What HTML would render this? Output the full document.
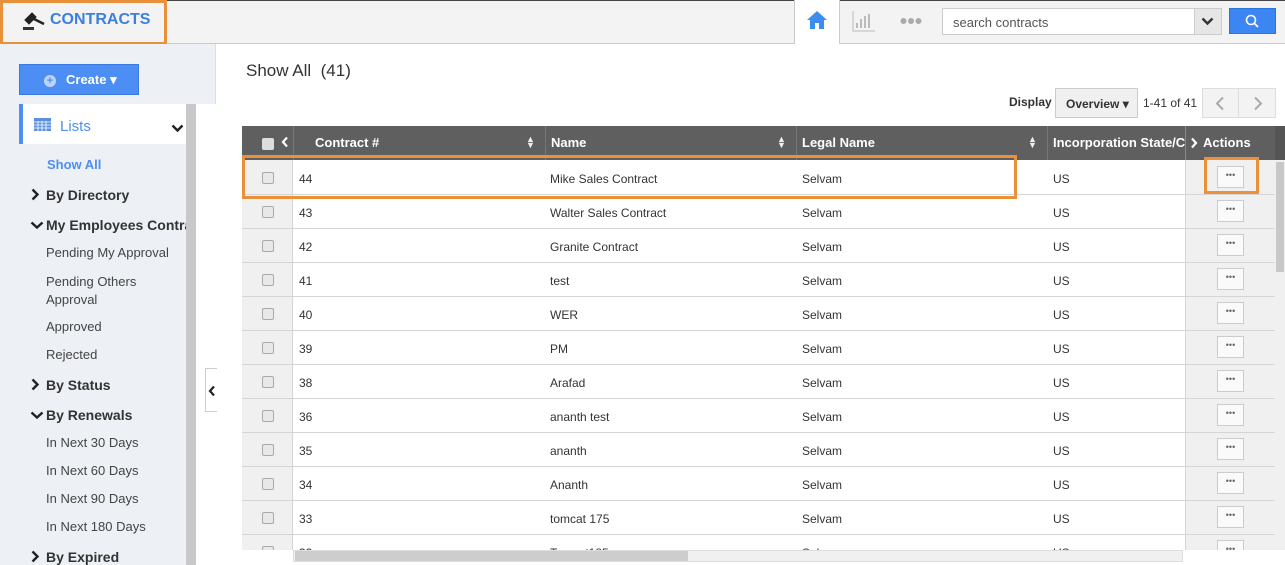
<!DOCTYPE html><html><head><style>
*{box-sizing:border-box;margin:0;padding:0}
body{width:1285px;height:565px;overflow:hidden;font-family:"Liberation Sans",Arial,sans-serif;background:#fff;position:relative;color:#333}
.a{position:absolute}
.top{left:0;top:0;width:1285px;height:44px;background:#f3f3f3;border-bottom:1px solid #ccc;border-top:1px solid #444}
.side{left:0;top:44px;width:216px;height:521px;background:#edf0f5;border-right:1px solid #ddd}
.si{position:absolute;left:46px;font-size:13px;color:#444}
.sb{position:absolute;left:46px;font-size:14px;font-weight:bold;color:#333}
.chev{position:absolute;left:31px}
.hd{top:126px;left:242px;width:1043px;height:34px;background:#5f5f5f;color:#fff;font-weight:bold;font-size:13px}
.row{left:242px;width:1033px;height:34px;border-bottom:1px solid #d5d5d5;font-size:12px;color:#333}
.row span{position:absolute;top:11px}
.cb{position:absolute;left:20px;top:11px;width:12px;height:12px;border:1px solid #aaa;border-radius:2px;background:#e8e8e8}
.act{position:absolute;left:975px;top:5px;width:27px;height:22px;border:1px solid #ccc;background:#fafafa;font-size:9px;text-align:center;line-height:16px;color:#666}
.sort{position:absolute;top:10px;font-size:9px;line-height:6px;color:#eee}
</style></head><body>
<div class="a top"></div>
<div class="a" style="left:0;top:0;width:167px;height:45px;border:3px solid #e8913a"></div>
<svg class="a" style="left:21px;top:11px" width="26" height="20" viewBox="0 0 26 20"><rect x="2" y="16" width="11" height="3" fill="#333"/><path d="M5 9l6-6 3 3-6 6z M11 7l12 6" stroke="#222" stroke-width="2.5" fill="#222"/></svg>
<div class="a" style="left:50px;top:11px;font-size:16px;font-weight:bold;color:#3b7fe0">CONTRACTS</div>
<div class="a" style="left:794px;top:0;width:46px;height:44px;background:#fff;border-left:1px solid #ccc;border-right:1px solid #ccc"></div>
<svg class="a" style="left:806px;top:9px" width="22" height="22" viewBox="0 0 22 22"><path d="M11 2L1 11h3v9h5v-6h4v6h5v-9h3z" fill="#3b8ef0"/></svg>
<svg class="a" style="left:852px;top:10px" width="24" height="22"><path d="M1 1v20h22" stroke="#bbb" fill="none"/><path d="M5 18v-5M9 18v-9M13 18v-12M17 18v-14" stroke="#bbb" stroke-width="2"/></svg>
<svg class="a" style="left:900px;top:17px" width="22" height="8"><circle cx="3.5" cy="4" r="3" fill="#aaa"/><circle cx="11" cy="4" r="3" fill="#aaa"/><circle cx="18.5" cy="4" r="3" fill="#aaa"/></svg>
<div class="a" style="left:942px;top:8px;width:280px;height:27px;background:#fff;border:1px solid #ccc;font-size:13px;color:#555;padding:6px 10px">search contracts</div>
<div class="a" style="left:1194px;top:9px;width:27px;height:25px;background:#e6e6e6;border-left:1px solid #ccc"></div>
<svg class="a" style="left:1201px;top:17px" width="13" height="9"><path d="M1.5 1.5l5 5 5-5" stroke="#333" stroke-width="2.4" fill="none"/></svg>
<div class="a" style="left:1229px;top:8px;width:47px;height:26px;background:#3b86f2;border:1px solid #2f73d6"></div>
<svg class="a" style="left:1244px;top:13px" width="16" height="16"><circle cx="7" cy="7" r="4.5" stroke="#fff" stroke-width="1.6" fill="none"/><path d="M10 10l4 4" stroke="#fff" stroke-width="1.8"/></svg>

<div class="a side"></div>
<div class="a" style="left:19px;top:64px;width:120px;height:31px;background:#4d8ef5;border:1px solid #3a7ae0;color:#fff;font-size:13px;font-weight:bold;padding:7px 0 0 24px"><span style="display:inline-block;width:12px;height:12px;border-radius:6px;background:#bcd4fa;color:#4d8ef5;font-size:11px;line-height:12px;text-align:center;margin-right:10px">+</span>Create ▾</div>
<div class="a" style="left:19px;top:104px;width:167px;height:40px;background:#fff;border-left:4px solid #4d8ef5"></div>
<svg class="a" style="left:34px;top:118px" width="17" height="13"><rect width="17" height="13" fill="#5b8fe0"/><path d="M0 4h17M0 7h17M0 10h17M4 3v10M8 3v10M12 3v10" stroke="#fff" stroke-width=".8"/></svg>
<div class="a" style="left:60px;top:118px;font-size:15px;color:#4d8ef5">Lists</div>
<svg class="a" style="left:171px;top:124px" width="13" height="9"><path d="M1.5 1.5l5 5 5-5" stroke="#222" stroke-width="2.4" fill="none"/></svg>
<div class="a" style="left:186px;top:104px;width:10px;height:461px;background:#c8c8c8"></div>
<div class="a" style="left:196px;top:104px;width:20px;height:461px;background:#fff"></div>
<div class="si" style="top:157px;color:#4d8ef5;font-weight:bold;font-size:13px;left:47px">Show All</div>
<svg class="chev" style="top:188px" width="9" height="13"><path d="M1.5 1.5l5 5-5 5" stroke="#222" stroke-width="2.4" fill="none"/></svg><div class="sb" style="top:187px">By Directory</div>
<svg class="chev" style="top:221px;left:30px" width="14" height="9"><path d="M1.5 1.5l5.5 5 5.5-5" stroke="#222" stroke-width="2.4" fill="none"/></svg><div class="sb" style="top:217px;width:140px;white-space:nowrap;overflow:hidden">My Employees Contracts</div>
<div class="si" style="top:245px">Pending My Approval</div>
<div class="si" style="top:273px;line-height:18px">Pending Others<br>Approval</div>
<div class="si" style="top:319px">Approved</div>
<div class="si" style="top:347px">Rejected</div>
<svg class="chev" style="top:378px" width="9" height="13"><path d="M1.5 1.5l5 5-5 5" stroke="#222" stroke-width="2.4" fill="none"/></svg><div class="sb" style="top:377px">By Status</div>
<svg class="chev" style="top:411px;left:30px" width="14" height="9"><path d="M1.5 1.5l5.5 5 5.5-5" stroke="#222" stroke-width="2.4" fill="none"/></svg><div class="sb" style="top:407px">By Renewals</div>
<div class="si" style="top:435px">In Next 30 Days</div>
<div class="si" style="top:463px">In Next 60 Days</div>
<div class="si" style="top:491px">In Next 90 Days</div>
<div class="si" style="top:519px">In Next 180 Days</div>
<svg class="chev" style="top:550px" width="9" height="13"><path d="M1.5 1.5l5 5-5 5" stroke="#222" stroke-width="2.4" fill="none"/></svg><div class="sb" style="top:549px">By Expired</div>
<div class="a" style="left:205px;top:368px;width:12px;height:44px;background:#fff;border:1px solid #ccc;border-right:none"></div>
<svg class="a" style="left:208px;top:385px" width="8" height="12"><path d="M6 1.5l-4 4.5 4 4.5" stroke="#222" stroke-width="2.2" fill="none"/></svg>

<div class="a" style="left:246px;top:61px;font-size:17px;color:#333">Show All &nbsp;(41)</div>
<div class="a" style="left:1009px;top:95px;font-size:12px;font-weight:bold">Display</div>
<div class="a" style="left:1055px;top:88px;width:83px;height:30px;background:#f0f0f0;border:1px solid #ccc;font-size:12px;font-weight:bold;padding:8px 0 0 10px">Overview ▾</div>
<div class="a" style="left:1143px;top:96px;font-size:12px">1-41 of 41</div>
<div class="a" style="left:1202px;top:88px;width:74px;height:30px;background:#f3f3f3;border:1px solid #ddd"></div>
<div class="a" style="left:1238px;top:88px;width:1px;height:30px;background:#ddd"></div>
<svg class="a" style="left:1215px;top:96px" width="10" height="15"><path d="M8 1.5l-6 6 6 6" stroke="#aaa" stroke-width="2" fill="none"/></svg>
<svg class="a" style="left:1253px;top:96px" width="10" height="15"><path d="M2 1.5l6 6-6 6" stroke="#aaa" stroke-width="2" fill="none"/></svg>

<div class="a hd">
<div style="position:absolute;left:20px;top:12px;width:12px;height:12px;background:#ddd;border-radius:2px"></div>
<svg style="position:absolute;left:39px;top:10px" width="8" height="12"><path d="M6 1.5l-4 4.5 4 4.5" stroke="#fff" stroke-width="2.2" fill="none"/></svg>
<div style="position:absolute;left:51px;top:0;width:1px;height:34px;background:#777"></div>
<div style="position:absolute;left:73px;top:9px">Contract #</div><div class="sort" style="left:284px">▲<br>▼</div>
<div style="position:absolute;left:303px;top:0;width:1px;height:34px;background:#777"></div>
<div style="position:absolute;left:309px;top:9px">Name</div><div class="sort" style="left:535px">▲<br>▼</div>
<div style="position:absolute;left:554px;top:0;width:1px;height:34px;background:#777"></div>
<div style="position:absolute;left:560px;top:9px">Legal Name</div><div class="sort" style="left:786px">▲<br>▼</div>
<div style="position:absolute;left:805px;top:0;width:1px;height:34px;background:#777"></div>
<div style="position:absolute;left:811px;top:9px;width:132px;white-space:nowrap;overflow:hidden">Incorporation State/Country</div>
<div style="position:absolute;left:943px;top:0;width:1px;height:34px;background:#888"></div>
<svg style="position:absolute;left:948px;top:11px" width="8" height="12"><path d="M2 1.5l4 4.5-4 4.5" stroke="#fff" stroke-width="2.2" fill="none"/></svg>
<div style="position:absolute;left:961px;top:9px">Actions</div>
<div style="position:absolute;left:1033px;top:0;width:10px;height:34px;background:#555"></div>
</div>
<div class="a" style="left:242px;top:160px;width:51px;height:390px;background:#f0f0f0;border-right:1px solid #d5d5d5"></div>
<div class="a" style="left:1185px;top:160px;width:90px;height:390px;background:#f0f0f0;border-left:1px solid #d5d5d5"></div>
<div class="a" style="left:1275px;top:160px;width:10px;height:390px;background:#f0f0f0"></div>
<div class="a" style="left:1276px;top:162px;width:8px;height:110px;background:#c8c8c8"></div>

<div class="a row" style="top:161px"><div class="cb"></div><span style="left:57px">44</span><span style="left:308px">Mike Sales Contract</span><span style="left:560px">Selvam</span><span style="left:811px">US</span><div class="act">•••</div></div>
<div class="a row" style="top:195px"><div class="cb"></div><span style="left:57px">43</span><span style="left:308px">Walter Sales Contract</span><span style="left:560px">Selvam</span><span style="left:811px">US</span><div class="act">•••</div></div>
<div class="a row" style="top:229px"><div class="cb"></div><span style="left:57px">42</span><span style="left:308px">Granite Contract</span><span style="left:560px">Selvam</span><span style="left:811px">US</span><div class="act">•••</div></div>
<div class="a row" style="top:263px"><div class="cb"></div><span style="left:57px">41</span><span style="left:308px">test</span><span style="left:560px">Selvam</span><span style="left:811px">US</span><div class="act">•••</div></div>
<div class="a row" style="top:297px"><div class="cb"></div><span style="left:57px">40</span><span style="left:308px">WER</span><span style="left:560px">Selvam</span><span style="left:811px">US</span><div class="act">•••</div></div>
<div class="a row" style="top:331px"><div class="cb"></div><span style="left:57px">39</span><span style="left:308px">PM</span><span style="left:560px">Selvam</span><span style="left:811px">US</span><div class="act">•••</div></div>
<div class="a row" style="top:365px"><div class="cb"></div><span style="left:57px">38</span><span style="left:308px">Arafad</span><span style="left:560px">Selvam</span><span style="left:811px">US</span><div class="act">•••</div></div>
<div class="a row" style="top:399px"><div class="cb"></div><span style="left:57px">36</span><span style="left:308px">ananth test</span><span style="left:560px">Selvam</span><span style="left:811px">US</span><div class="act">•••</div></div>
<div class="a row" style="top:433px"><div class="cb"></div><span style="left:57px">35</span><span style="left:308px">ananth</span><span style="left:560px">Selvam</span><span style="left:811px">US</span><div class="act">•••</div></div>
<div class="a row" style="top:467px"><div class="cb"></div><span style="left:57px">34</span><span style="left:308px">Ananth</span><span style="left:560px">Selvam</span><span style="left:811px">US</span><div class="act">•••</div></div>
<div class="a row" style="top:501px"><div class="cb"></div><span style="left:57px">33</span><span style="left:308px">tomcat 175</span><span style="left:560px">Selvam</span><span style="left:811px">US</span><div class="act">•••</div></div>
<div class="a row" style="top:535px;height:15px;overflow:hidden;border:none"><div class="cb"></div><span style="left:57px">32</span><span style="left:308px">Tomcat185</span><span style="left:560px">Selvam</span><span style="left:811px">US</span><div class="act">•••</div></div>
<div class="a" style="left:242px;top:550px;width:1043px;height:15px;background:#fff"></div>
<div class="a" style="left:293px;top:550px;width:890px;height:12px;background:#f0f0f0;border:1px solid #ddd"></div>
<div class="a" style="left:295px;top:551px;width:393px;height:10px;background:#cdcdcd"></div>

<div class="a" style="left:242px;top:155px;width:775px;height:44px;border:3px solid #e8913a"></div>
<div class="a" style="left:1204px;top:157px;width:55px;height:37px;border:3px solid #e8913a"></div>
</body></html>
